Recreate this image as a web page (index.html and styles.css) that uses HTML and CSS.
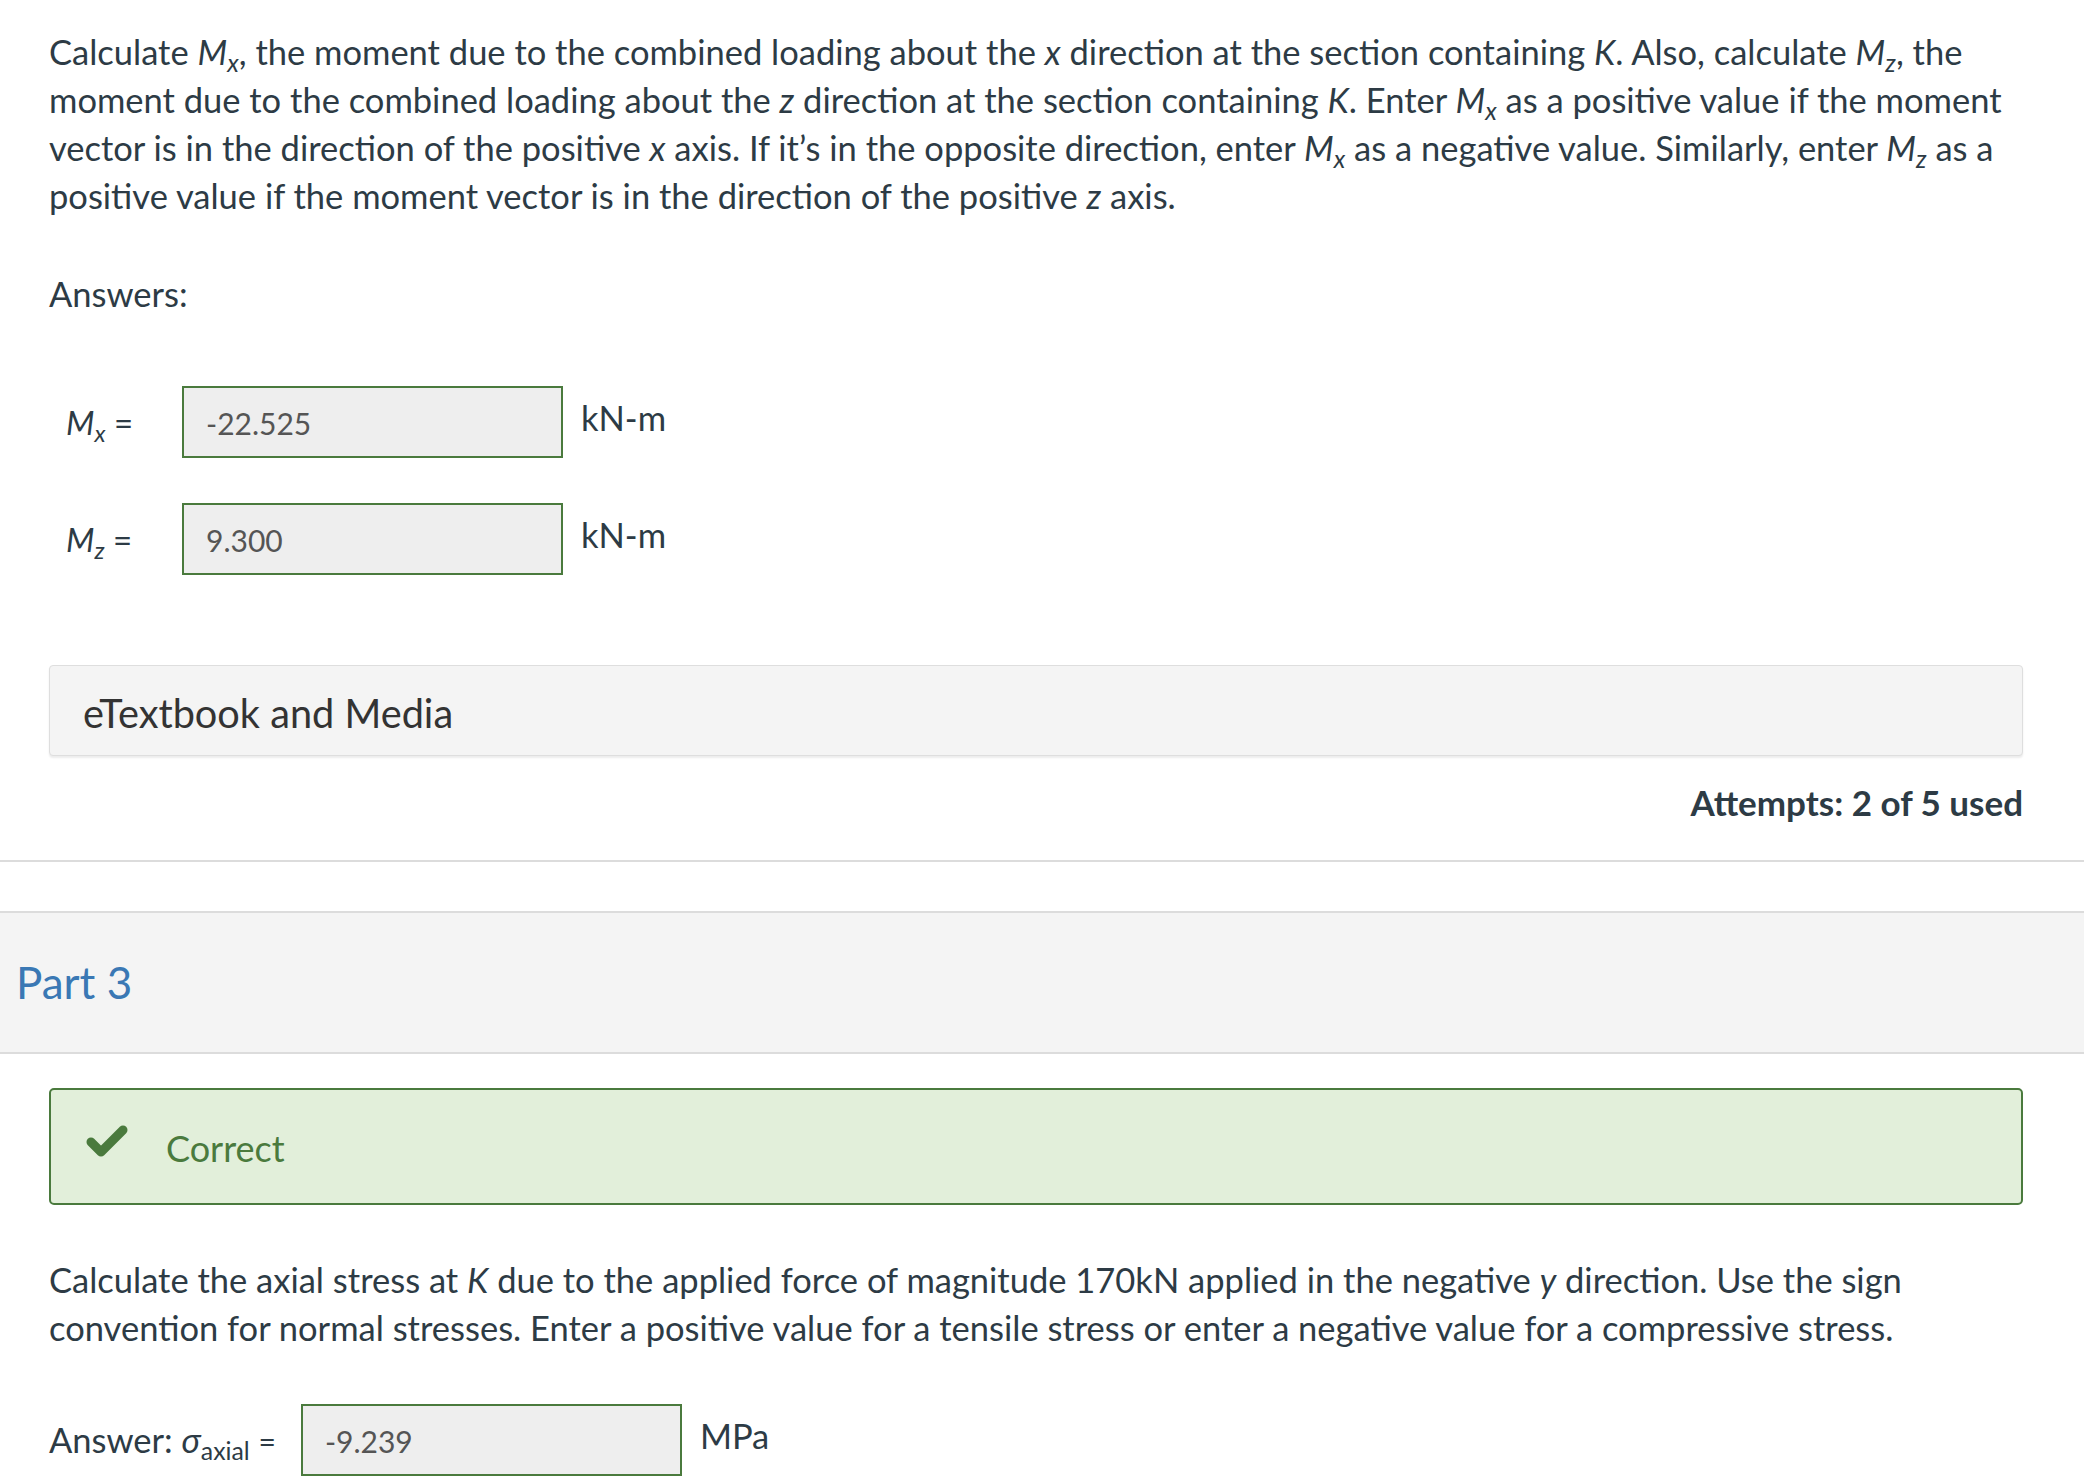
FILE: index.html
```html
<!DOCTYPE html>
<html lang="en">
<head>
<meta charset="utf-8">
<title>Part 2 / Part 3</title>
<link rel="stylesheet" href="styles.css">
</head>
<body>
<section class="part part-done">
  <p class="question">Calculate <i>M<sub>x</sub></i>, the moment due to the combined loading about the <i>x</i> direction at the section containing <i>K</i>. Also, calculate <i>M<sub>z</sub></i>, the moment due to the combined loading about the <i>z</i> direction at the section containing <i>K</i>. Enter <i>M<sub>x</sub></i> as a positive value if the moment vector is in the direction of the positive <i>x</i> axis. If it’s in the opposite direction, enter <i>M<sub>x</sub></i> as a negative value. Similarly, enter <i>M<sub>z</sub></i> as a positive value if the moment vector is in the direction of the positive <i>z</i> axis.</p>
  <p class="answers-title">Answers:</p>
  <div class="answer-row">
    <span class="answer-label"><i>M<sub>x</sub></i> =</span>
    <span class="answer-box">-22.525</span>
    <span class="answer-unit">kN-m</span>
  </div>
  <div class="answer-row">
    <span class="answer-label"><i>M<sub>z</sub></i> =</span>
    <span class="answer-box">9.300</span>
    <span class="answer-unit">kN-m</span>
  </div>
  <div class="media-box">eTextbook and Media</div>
  <div class="attempts">Attempts: 2 of 5 used</div>
</section>
<div class="part-header">Part 3</div>
<section class="part">
  <div class="correct-box">
    <svg class="check" viewBox="0 0 42 32" width="42" height="32" aria-hidden="true"><polyline points="5,17 15,27 37,5" fill="none" stroke="#4a7a3d" stroke-width="9" stroke-linecap="round" stroke-linejoin="round"/></svg>
    <span class="correct-text">Correct</span>
  </div>
  <p class="question q2">Calculate the axial stress at <i>K</i> due to the applied force of magnitude 170kN applied in the negative <i>y</i> direction. Use the sign convention for normal stresses. Enter a positive value for a tensile stress or enter a negative value for a compressive stress.</p>
  <div class="answer-row row3">
    <span class="answer-label wide">Answer: <i>σ</i><sub>axial</sub> <span class="eq">=</span></span>
    <span class="answer-box">-9.239</span>
    <span class="answer-unit">MPa</span>
  </div>
</section>
</body>
</html>
```
FILE: styles.css
```css
html, body {
  margin: 0;
  padding: 0;
  background: #ffffff;
}
body {
  font-family: Lato, "Open Sans", sans-serif;
  color: #2d3b45;
  font-size: 34.5px;
  line-height: 48px;
}
.part {
  padding: 0 61px 0 49px;
}
.part-done {
  padding-top: 28px;
  padding-bottom: 34px;
  border-bottom: 2px solid #dcdcdc;
  margin-bottom: 49px;
}
.question {
  margin: 0;
}
.question sub, .answer-label sub {
  font-size: 0.72em;
  line-height: 0;
  vertical-align: -0.28em;
}
.answers-title {
  margin: 50px 0 0 0;
}
.answer-row {
  display: flex;
  align-items: flex-start;
  margin-top: 45px;
}
.answers-title + .answer-row {
  margin-top: 68px;
}
.answer-label {
  width: 116px;
  padding-left: 17px;
  flex: none;
  align-self: center;
  font-size: 33px;
}
.answer-box {
  box-sizing: border-box;
  width: 381px;
  height: 72px;
  border: 2px solid #4a7a3d;
  background: #eeeeee;
  color: #555555;
  font-size: 30px;
  line-height: 70px;
  padding-left: 22px;
  flex: none;
}
.answer-unit {
  margin-left: 18px;
  font-size: 34.5px;
  line-height: 64px;
}
.media-box {
  margin-top: 90px;
  height: 89px;
  border: 1px solid #dedede;
  border-radius: 4px;
  background: #f4f4f4;
  box-shadow: 0 2px 2px rgba(0, 0, 0, 0.08);
  padding-left: 33px;
  font-size: 39.7px;
  line-height: 94px;
  color: #333333;
}
.attempts {
  text-align: right;
  font-weight: 700;
  font-size: 35px;
  line-height: 48px;
  margin-top: 22px;
}
.part-header {
  box-sizing: border-box;
  height: 143px;
  background: #f4f4f4;
  border-top: 2px solid #dcdcdc;
  border-bottom: 2px solid #dcdcdc;
  padding-left: 16px;
  font-size: 44px;
  line-height: 139px;
  color: #3a78b4;
}
.correct-box {
  margin-top: 34px;
  box-sizing: border-box;
  height: 117px;
  border: 2px solid #4a7a3d;
  border-radius: 5px;
  background: #e2efda;
  display: flex;
  align-items: flex-start;
}
.check {
  margin: 35px 0 0 35px;
  flex: none;
}
.correct-text {
  margin: 0 0 0 38px;
  color: #4a7a3d;
  font-size: 36px;
  line-height: 116px;
}
.q2 {
  margin-top: 51px;
}
.row3 {
  margin-top: 52px;
}
.answer-label.wide {
  width: auto;
  padding-left: 0;
  margin-right: 25px;
  font-size: 34.5px;
}
.answer-label .eq {
  font-size: 30px;
}
```
